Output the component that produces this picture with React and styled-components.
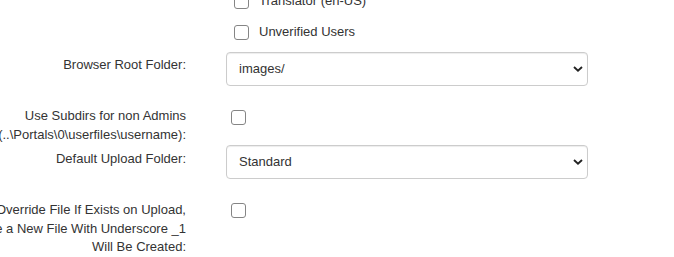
import React from 'react';
import styled, { createGlobalStyle } from 'styled-components';

const GlobalStyle = createGlobalStyle`
  html, body {
    margin: 0;
    padding: 0;
    background: #fff;
    overflow: hidden;
  }
  body {
    font-family: "Liberation Sans", Arial, sans-serif;
    font-size: 13px;
    line-height: 1.42857;
    color: #333;
  }
`;

const Form = styled.div`
  margin: -14px 0 0 -60px;
  width: 720px;
`;

const Row = styled.div`
  display: grid;
  grid-template-columns: 246px 362px;
  column-gap: 40px;
  align-items: start;
  margin-bottom: ${p => p.$gap || 0}px;
`;

const Label = styled.label`
  text-align: right;
  padding-top: ${p => (p.$pad != null ? p.$pad : 4)}px;
  color: #333;
`;

const CheckList = styled.div`
  display: flex;
  flex-direction: column;
  padding-left: 8px;
  margin-bottom: 4px;
`;

const CheckItem = styled.label`
  display: flex;
  align-items: center;
  gap: 10px;
  height: 31px;
  color: #333;
`;

const Box = styled.span`
  display: block;
  flex: none;
  width: 13px;
  height: 13px;
  border: 1px solid #858585;
  border-radius: 3px;
  background: #fff;
  margin-top: ${p => p.$top || 0}px;
  margin-left: ${p => p.$left || 0}px;
`;

const SelectWrap = styled.div`
  position: relative;
  width: 362px;
  height: 34px;
`;

const Select = styled.div`
  box-sizing: border-box;
  width: 100%;
  height: 34px;
  padding: 7px 12px 7px 12px;
  border: 1px solid #ccc;
  border-radius: 4px;
  background: #fff;
  box-shadow: inset 0 1px 1px rgba(0, 0, 0, 0.075);
  color: #333;
`;

const Chevron = styled.svg`
  position: absolute;
  right: 5px;
  top: 14px;
  width: 10px;
  height: 6px;
`;

const Dropdown = ({ value }) => (
  <SelectWrap>
    <Select>{value}</Select>
    <Chevron viewBox="0 0 10 6">
      <path d="M1 1 L5 4.6 L9 1" fill="none" stroke="#222" strokeWidth="1.9" />
    </Chevron>
  </SelectWrap>
);

export default function App() {
  return (
    <>
      <GlobalStyle />
      <Form>
        <Row>
          <div />
          <CheckList>
            <CheckItem><Box />Translator (en-US)</CheckItem>
            <CheckItem><Box />Unverified Users</CheckItem>
          </CheckList>
        </Row>
        <Row $gap={17}>
          <Label>Browser Root Folder:</Label>
          <Dropdown value="images/" />
        </Row>
        <Row $gap={1}>
          <Label>Use Subdirs for non Admins (..\Portals\0\userfiles\username):</Label>
          <Box $top={7} $left={5} />
        </Row>
        <Row $gap={18}>
          <Label $pad={4.5}>Default Upload Folder:</Label>
          <Dropdown value="Standard" />
        </Row>
        <Row>
          <Label>Override File If Exists on Upload, Otherwise a New File With Underscore _1 Will Be Created:</Label>
          <Box $top={6} $left={5} />
        </Row>
      </Form>
    </>
  );
}
